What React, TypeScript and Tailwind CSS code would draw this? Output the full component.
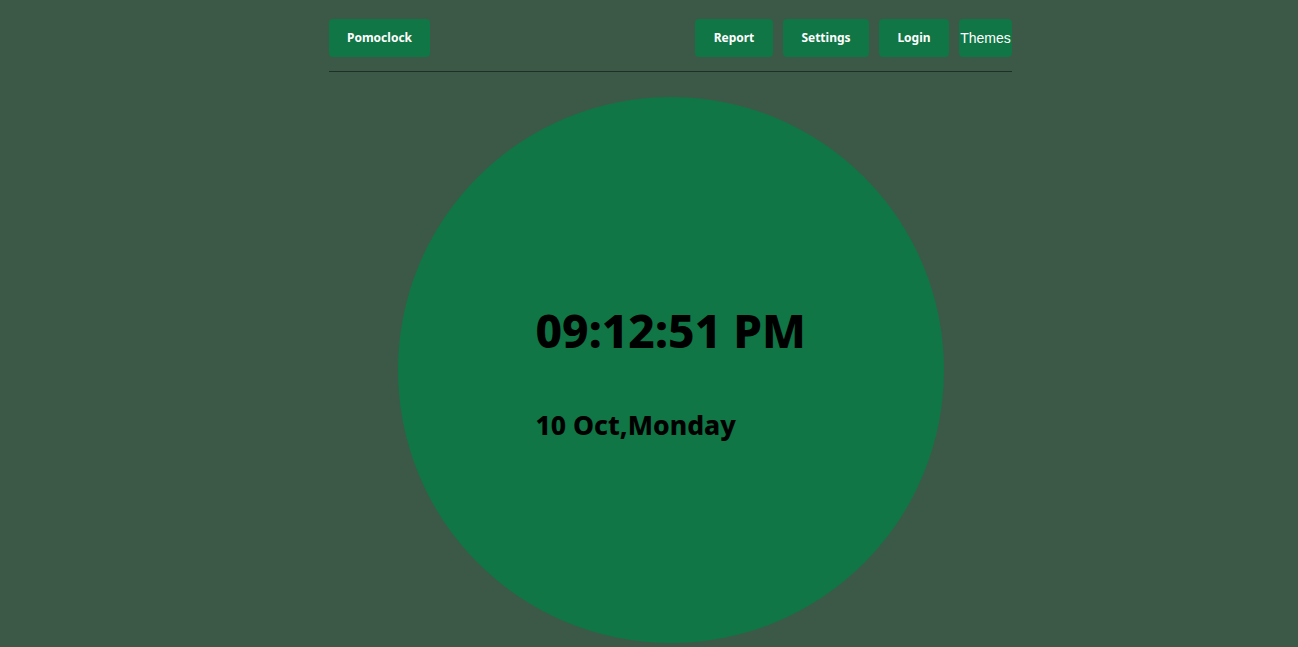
export default function App() {
  const navBtn =
    "h-[38px] rounded-[4px] bg-[#107645] text-white text-[12px] font-bold flex items-center justify-center";
  return (
    <div className="min-h-screen w-full bg-[#3c5948] font-['Noto_Sans',sans-serif]">
      <div className="ml-[329px] w-[683px] pt-[19px]">
        <header className="flex items-center justify-between pb-[14px] border-b border-[#1f2f27]">
          <button className={navBtn + " w-[101px]"}>Pomoclock</button>
          <nav className="flex gap-[10px]">
            <button className={navBtn + " w-[78px]"}>Report</button>
            <button className={navBtn + " w-[86px]"}>Settings</button>
            <button className={navBtn + " w-[70px]"}>Login</button>
            <button className="h-[38px] w-[53px] rounded-[4px] bg-[#107645] text-white text-[14px] font-['Liberation_Sans',sans-serif] flex items-center justify-center">
              Themes
            </button>
          </nav>
        </header>
        <main className="flex justify-center pt-[25px]">
          <div className="w-[546px] h-[546px] rounded-full bg-[#107645] flex flex-col pl-[138px] pt-[205px]">
            <div className="text-[46px] leading-[56px] font-extrabold text-black">
              09:12:51 PM
            </div>
            <div className="mt-[50px] text-[26.5px] leading-[34px] font-extrabold text-black">
              10 Oct,Monday
            </div>
          </div>
        </main>
      </div>
    </div>
  );
}
